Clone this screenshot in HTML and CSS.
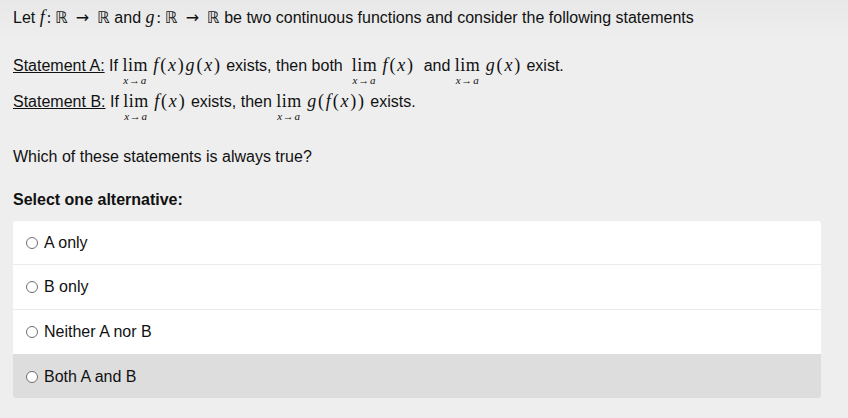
FILE: index.html
```html
<!DOCTYPE html>
<html lang="en">
<head>
  <meta charset="UTF-8">
  <title>Question</title>
  <link rel="stylesheet" href="styles.css">
</head>
<body>
  <div class="question">
    <p class="intro">Let <i class="m">f</i><span class="mo">:</span><span class="bb">ℝ</span><span class="arrow">→</span><span class="bb">ℝ</span> and <i class="m">g</i><span class="mo">:</span><span class="bb">ℝ</span><span class="arrow">→</span><span class="bb">ℝ</span> be two continuous functions and consider the following statements</p>

    <div class="statements">
      <p class="stmt"><u>Statement A:</u> If <span class="lim"><span class="lim-top">lim</span><span class="lim-sub">x→a</span></span> <span class="expr"><i>f</i>(<i>x</i>)<i>g</i>(<i>x</i>)</span> exists, then both &nbsp;<span class="lim"><span class="lim-top">lim</span><span class="lim-sub">x→a</span></span> <span class="expr"><i>f</i>(<i>x</i>)</span>&nbsp; and <span class="lim"><span class="lim-top">lim</span><span class="lim-sub">x→a</span></span> <span class="expr"><i>g</i>(<i>x</i>)</span> exist.</p>
      <p class="stmt"><u>Statement B:</u> If <span class="lim"><span class="lim-top">lim</span><span class="lim-sub">x→a</span></span> <span class="expr"><i>f</i>(<i>x</i>)</span> exists, then <span class="lim"><span class="lim-top">lim</span><span class="lim-sub">x→a</span></span> <span class="expr"><i>g</i>(<i>f</i>(<i>x</i>))</span> exists.</p>
    </div>

    <p class="ask">Which of these statements is always true?</p>

    <p class="select">Select one alternative:</p>

    <div class="options">
      <div class="option"><span class="radio"></span>A only</div>
      <div class="option"><span class="radio"></span>B only</div>
      <div class="option"><span class="radio"></span>Neither A nor B</div>
      <div class="option hover"><span class="radio"></span>Both A and B</div>
    </div>
  </div>
</body>
</html>
```

FILE: styles.css
```css
* {
  margin: 0;
  padding: 0;
  box-sizing: border-box;
}

body {
  background: linear-gradient(#e8e8e8, #eeeeee 40px);
  font-family: "Liberation Sans", Arial, sans-serif;
  font-size: 16px;
  color: #111;
  height: 100vh;
}

.question {
  padding: 9px 27px 0 13px;
}

.intro {
  line-height: 18px;
}

.m, .expr, .lim {
  font-family: "Liberation Serif", "Times New Roman", serif;
  font-size: 18px;
  line-height: 16px;
}

.expr {
  letter-spacing: 1.8px;
  margin-left: 1px;
}

.mo {
  font-family: "Liberation Serif", serif;
  font-size: 16px;
  line-height: 16px;
  margin: 0 4px 0 2px;
}

.bb, .arrow {
  font-family: "DejaVu Sans", sans-serif;
  font-size: 16px;
  line-height: 16px;
}

.arrow {
  margin: 0 8px;
}

.statements {
  margin-top: 30px;
}

.stmt {
  line-height: 18px;
  height: 36px;
}

.lim {
  display: inline-flex;
  flex-direction: column;
  align-items: center;
  vertical-align: baseline;
  margin-top: -2px;
}

.lim-top {
  line-height: 20px;
  letter-spacing: 0.5px;
}

.lim-sub {
  font-size: 11px;
  font-style: italic;
  letter-spacing: 0.8px;
  line-height: 11px;
}

.ask {
  margin-top: 19px;
  line-height: 18px;
}

.select {
  margin-top: 25px;
  line-height: 18px;
  font-weight: bold;
}

.options {
  margin-top: 12px;
  background: #fff;
  border-radius: 3px;
  overflow: hidden;
}

.option {
  display: flex;
  align-items: center;
  height: 45px;
  padding-left: 13px;
  border-top: 1px solid #ebebeb;
}

.option:first-child {
  border-top: none;
  height: 43px;
}

.option.hover {
  height: 44px;
  background: #dddddd;
  border-top-color: #dddddd;
}

.radio {
  width: 12px;
  height: 12px;
  border: 1px solid #6f6f6f;
  border-radius: 50%;
  background: #fff;
  margin-right: 6px;
}
```
